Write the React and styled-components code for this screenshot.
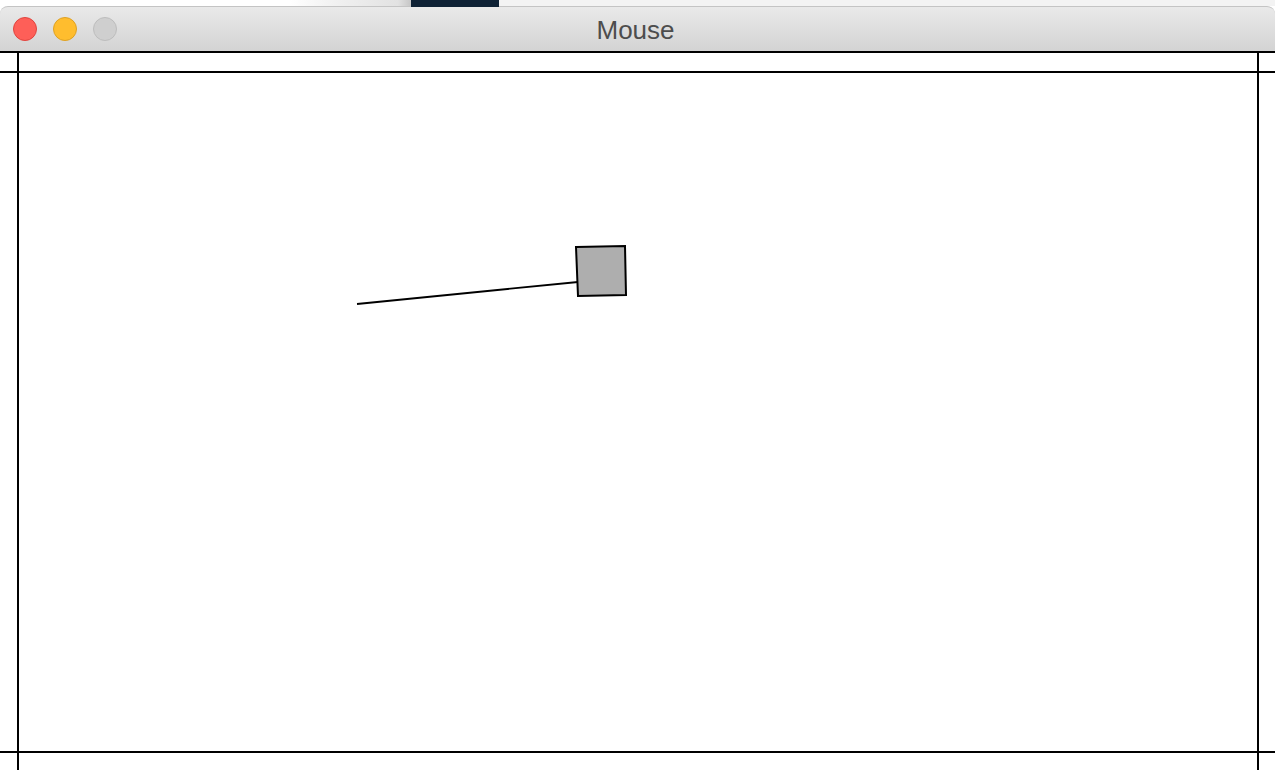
import styled, { createGlobalStyle } from "styled-components";

const Global = createGlobalStyle`
  html, body {
    margin: 0;
    padding: 0;
    background: #fff;
    overflow: hidden;
  }
`;

const Page = styled.div`
  width: 1275px;
  height: 770px;
  display: flex;
  flex-direction: column;
  font-family: "Liberation Sans", Arial, sans-serif;
`;

const DesktopStrip = styled.div`
  height: 6px;
  display: flex;
  background: #f3f3f3;
`;

const StripFade = styled.div`
  width: 411px;
  background: linear-gradient(to right, #fff 0, #fff 290px, #f1f1f1 335px, #e2e2e2 398px, #c6c6c6 411px);
`;

// one row taller than the strip, it sits over the title bar's top edge
const StripDark = styled.div`
  width: 88px;
  height: 7px;
  position: relative;
  z-index: 1;
  background: #0f2235;
`;

const TitleBar = styled.header`
  height: 45px;
  box-sizing: border-box;
  padding: 0 13px;
  display: flex;
  align-items: center;
  position: relative;
  border-top: 1px solid #c4c4c4;
  border-radius: 8px 8px 0 0;
  background: linear-gradient(to bottom, #e9e9e9, #d3d3d3);
`;

const Lights = styled.div`
  display: flex;
  gap: 16px;
`;

const Light = styled.span`
  width: 24px;
  height: 24px;
  box-sizing: border-box;
  border-radius: 50%;
  border: 1px solid ${p => p.$edge};
  background: ${p => p.$fill};
`;

const Title = styled.h1`
  position: absolute;
  left: 0;
  right: 4px;
  top: 8px;
  margin: 0;
  text-align: center;
  font-size: 26px;
  line-height: 30px;
  font-weight: 400;
  color: #4d4d4d;
`;

const Canvas = styled.svg`
  display: block;
  width: 1275px;
  height: 719px;
`;

export default function App() {
  return (
    <Page>
      <Global />
      <DesktopStrip>
        <StripFade />
        <StripDark />
      </DesktopStrip>
      <TitleBar>
        <Lights>
          <Light $fill="#fe5f58" $edge="#e0443e" />
          <Light $fill="#ffbd2e" $edge="#dea123" />
          <Light $fill="#cfcfcf" $edge="#bdbdbd" />
        </Lights>
        <Title>Mouse</Title>
      </TitleBar>
      <Canvas viewBox="0 51 1275 719">
        <g stroke="#000" strokeWidth="2" fill="none" shapeRendering="crispEdges">
          <line x1="0" y1="52" x2="1275" y2="52" />
          <line x1="0" y1="72" x2="1275" y2="72" />
          <line x1="0" y1="752" x2="1275" y2="752" />
          <line x1="18" y1="52" x2="18" y2="770" />
          <line x1="1258" y1="52" x2="1258" y2="770" />
        </g>
        <line x1="357" y1="304" x2="578" y2="282" stroke="#000" strokeWidth="1.8" />
        <polygon points="576,247 625,246 626,295 578,296" fill="#aeaeae" stroke="#000" strokeWidth="2" />
      </Canvas>
    </Page>
  );
}
